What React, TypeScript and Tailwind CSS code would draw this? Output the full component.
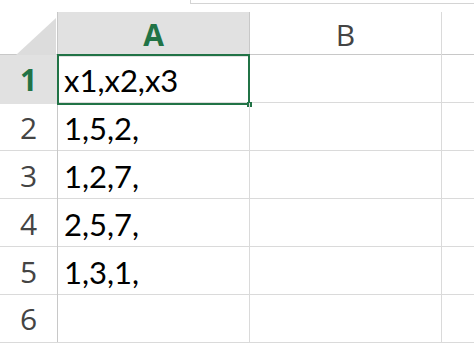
const rows = [
  { n: 1, a: "x1,x2,x3" },
  { n: 2, a: "1,5,2," },
  { n: 3, a: "1,2,7," },
  { n: 4, a: "2,5,7," },
  { n: 5, a: "1,3,1," },
  { n: 6, a: "" },
];

const App = () => {
  return (
    <div className="w-[474px] h-[348px] bg-white overflow-hidden">
      {/* formula bar edge */}
      <div className="h-[12px] flex">
        <div className="w-[190px]" />
        <div className="flex-1 h-[4px] border-l border-b border-[#d4d4d4]" />
      </div>

      {/* column headers */}
      <div className="grid grid-cols-[58px_192px_192px_1fr] h-[43px] border-b border-[#c8c8c8]">
        <div className="flex items-end justify-end pr-[1px] pb-[2px] border-r border-[#c8c8c8]">
          <svg width="40" height="37" viewBox="0 0 40 37">
            <polygon points="0,37 40,37 40,0" fill="#dcdcdc" />
          </svg>
        </div>
        <div
          className="flex items-center justify-center bg-[#e1e1e1] border-r border-[#c8c8c8] text-[#217346] font-bold text-[30px]"
          style={{ fontFamily: '"Open Sans", sans-serif' }}
        >
          A
        </div>
        <div
          className="flex items-center justify-center border-r border-[#dadada] text-[#444444] text-[30px]"
          style={{ fontFamily: '"Open Sans", sans-serif' }}
        >
          B
        </div>
        <div />
      </div>

      {/* rows */}
      {rows.map((r) => (
        <div
          key={r.n}
          className="grid grid-cols-[58px_192px_192px_1fr] h-[48px] border-b border-[#dadada]"
        >
          <div
            className={
              r.n === 1
                ? "flex items-center justify-center bg-[#e1e1e1] border-r border-[#c8c8c8] text-[#217346] font-bold text-[30px]"
                : "flex items-center justify-center border-r border-[#c8c8c8] text-[#444444] text-[30px]"
            }
            style={{ fontFamily: '"Open Sans", sans-serif' }}
          >
            {r.n}
          </div>
          <div
            className="relative flex items-center pl-[6px] pt-[2px] border-r border-[#dadada] text-black text-[31px]"
            style={{ fontFamily: 'Lato, "Liberation Sans", sans-serif' }}
          >
            {r.a}
            {r.n === 1 && (
              <>
                <div className="absolute -left-[1px] -top-[1px] -right-[1px] -bottom-[1px] border-2 border-[#217346]" />
                <div className="absolute -right-[3px] -bottom-[3px] w-[5px] h-[5px] bg-[#217346]" />
              </>
            )}
          </div>
          <div className="border-r border-[#dadada]" />
          <div />
        </div>
      ))}
    </div>
  );
};

export default App;
